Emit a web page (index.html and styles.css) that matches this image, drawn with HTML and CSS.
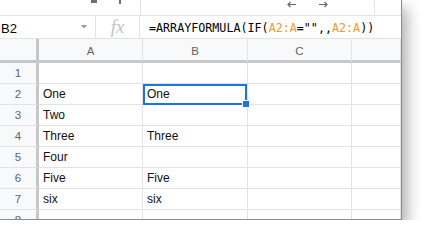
FILE: index.html
```html
<!DOCTYPE html>
<html lang="en">
<head>
    <meta charset="UTF-8">
    <title>Sheet - ARRAYFORMULA</title>
    <link rel="stylesheet" href="styles.css">
</head>
<body>
    <div class="window">
        <div class="toolbar">
            <span class="tb-bit tb-bit-a"></span>
            <span class="tb-bit tb-bit-b"></span>
            <span class="tb-sep tb-sep-a"></span>
            <svg class="tb-arrow tb-arrow-left" width="10" height="7" viewBox="0 0 10 7">
                <path d="M9 3.5H1.5M3.5 1L1 3.5L3.5 6" fill="none" stroke="#666" stroke-width="1.2"/>
            </svg>
            <svg class="tb-arrow tb-arrow-right" width="10" height="7" viewBox="0 0 10 7">
                <path d="M1 3.5H8.5M6.5 1L9 3.5L6.5 6" fill="none" stroke="#666" stroke-width="1.2"/>
            </svg>
            <span class="tb-sep tb-sep-b"></span>
        </div>

        <div class="formula-bar">
            <div class="name-box">
                <span>B2</span>
                <svg width="6" height="4" viewBox="0 0 6 4"><path d="M0 0H6L3 3.5Z" fill="#9a9a9a"/></svg>
            </div>
            <div class="fx">fx</div>
            <div class="formula">=ARRAYFORMULA(IF(<span class="ref">A2:A</span>="",,<span class="ref">A2:A</span>))</div>
        </div>

        <div class="grid">
            <div class="corner"></div>
            <div class="col-head">A</div>
            <div class="col-head">B</div>
            <div class="col-head">C</div>
            <div class="col-head"></div>

            <div class="row-num">1</div>
            <div class="cell"></div><div class="cell"></div><div class="cell"></div><div class="cell"></div>

            <div class="row-num">2</div>
            <div class="cell">One</div><div class="cell selected">One</div><div class="cell"></div><div class="cell"></div>

            <div class="row-num">3</div>
            <div class="cell">Two</div><div class="cell"></div><div class="cell"></div><div class="cell"></div>

            <div class="row-num">4</div>
            <div class="cell">Three</div><div class="cell">Three</div><div class="cell"></div><div class="cell"></div>

            <div class="row-num">5</div>
            <div class="cell">Four</div><div class="cell"></div><div class="cell"></div><div class="cell"></div>

            <div class="row-num">6</div>
            <div class="cell">Five</div><div class="cell">Five</div><div class="cell"></div><div class="cell"></div>

            <div class="row-num">7</div>
            <div class="cell">six</div><div class="cell">six</div><div class="cell"></div><div class="cell"></div>

            <div class="row-num">8</div>
            <div class="cell"></div><div class="cell"></div><div class="cell"></div><div class="cell"></div>
        </div>
    </div>
</body>
</html>
```

FILE: styles.css
```css
body {
    margin: 0;
    background-color: #fff;
    font-family: "Liberation Sans", Arial, sans-serif;
    color: #222;
}

.window {
    width: 401px;
    height: 219px;
    overflow: hidden;
    background-color: #fff;
    border-right: 1px solid #8d8d8d;
    border-bottom: 1px solid #8d8d8d;
    box-shadow: 5px 8px 14px rgba(0, 0, 0, 0.32);
}

/* cut-off toolbar strip */
.toolbar {
    display: flex;
    align-items: flex-start;
    height: 15px;
    border-bottom: 1px solid #e2e2e2;
}

.tb-bit {
    display: block;
    background-color: #707070;
}

.tb-bit-a {
    width: 6px;
    height: 3px;
    margin-left: 91px;
}

.tb-bit-b {
    width: 2px;
    height: 4px;
    margin-left: 22px;
}

.tb-sep {
    display: block;
    width: 1px;
    height: 15px;
    background-color: #e2e2e2;
}

.tb-sep-a {
    margin-left: 19px;
}

.tb-arrow {
    margin-top: 1px;
}

.tb-arrow-left {
    margin-left: 146px;
}

.tb-arrow-right {
    margin-left: 21px;
}

.tb-sep-b {
    margin-left: 46px;
}

/* formula bar */
.formula-bar {
    display: flex;
    height: 22px;
    border-bottom: 1px solid #e2e2e2;
}

.name-box {
    display: flex;
    align-items: center;
    justify-content: space-between;
    width: 96px;
    padding: 0 8px 0 1px;
    box-sizing: border-box;
    border-right: 1px solid #e2e2e2;
    font-size: 13px;
    color: #000;
}

.name-box span {
    padding-top: 2px;
}

.fx {
    width: 43px;
    border-right: 1px solid #e2e2e2;
    text-align: center;
    font-family: "Liberation Serif", serif;
    font-style: italic;
    font-size: 19px;
    line-height: 22px;
    color: #c4c4c4;
}

.formula {
    padding-left: 9px;
    font-family: "DejaVu Sans Mono", monospace;
    font-size: 11.7px;
    line-height: 24px;
    color: #000;
    white-space: nowrap;
}

.ref {
    color: #ef982c;
}

/* sheet grid */
.grid {
    display: grid;
    grid-template-columns: 39px 104px 105px 104px 49px;
    grid-template-rows: 24px;
    grid-auto-rows: 21px;
}

.grid > div {
    box-sizing: border-box;
    border-right: 1px solid #e2e2e2;
    border-bottom: 1px solid #e2e2e2;
}

.corner,
.col-head {
    background-color: #f8f9fa;
}

.grid > .corner,
.grid > .col-head {
    border-bottom: 3px solid #c7c7c7;
}

.grid > .corner,
.grid > .row-num {
    border-right: 3px solid #c7c7c7;
}

.col-head {
    display: flex;
    align-items: center;
    justify-content: center;
    padding-top: 2px;
    font-size: 11.5px;
    color: #5f6368;
}

.row-num {
    display: flex;
    align-items: center;
    justify-content: center;
    background-color: #f8f9fa;
    font-size: 11.5px;
    color: #5f6368;
}

.cell {
    display: flex;
    align-items: flex-end;
    padding: 0 0 3px 4px;
    font-size: 12px;
    line-height: 14px;
    color: #111;
}

.cell.selected {
    position: relative;
}

.cell.selected::before {
    content: "";
    position: absolute;
    top: 0;
    left: 0;
    right: 0;
    bottom: -1px;
    border: 2px solid #1a73e8;
}

.cell.selected::after {
    content: "";
    position: absolute;
    right: -3px;
    bottom: -4px;
    width: 6px;
    height: 6px;
    background-color: #1a73e8;
    border: 1px solid #fff;
}
```
